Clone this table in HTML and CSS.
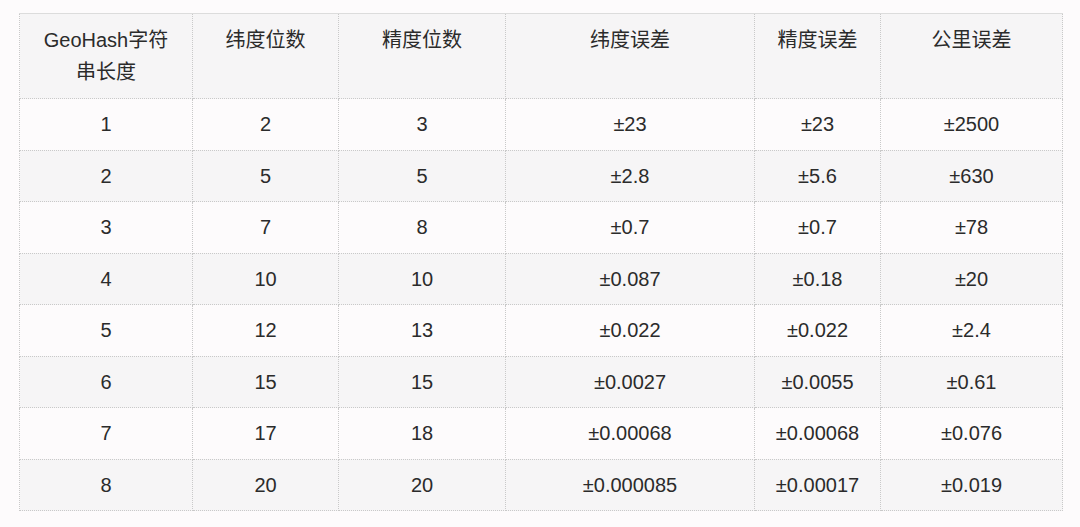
FILE: index.html
```html
<!DOCTYPE html>
<html lang="zh-CN">
<head>
<meta charset="utf-8">
<title>GeoHash</title>
<link rel="stylesheet" href="styles.css">
</head>
<body>
<table class="geo">
  <colgroup>
    <col class="c1"><col class="c2"><col class="c3"><col class="c4"><col class="c5"><col class="c6">
  </colgroup>
  <thead>
    <tr><th>GeoHash字符串长度</th><th>纬度位数</th><th>精度位数</th><th>纬度误差</th><th>精度误差</th><th>公里误差</th></tr>
  </thead>
  <tbody>
    <tr><td>1</td><td>2</td><td>3</td><td>±23</td><td>±23</td><td>±2500</td></tr>
    <tr><td>2</td><td>5</td><td>5</td><td>±2.8</td><td>±5.6</td><td>±630</td></tr>
    <tr><td>3</td><td>7</td><td>8</td><td>±0.7</td><td>±0.7</td><td>±78</td></tr>
    <tr><td>4</td><td>10</td><td>10</td><td>±0.087</td><td>±0.18</td><td>±20</td></tr>
    <tr><td>5</td><td>12</td><td>13</td><td>±0.022</td><td>±0.022</td><td>±2.4</td></tr>
    <tr><td>6</td><td>15</td><td>15</td><td>±0.0027</td><td>±0.0055</td><td>±0.61</td></tr>
    <tr><td>7</td><td>17</td><td>18</td><td>±0.00068</td><td>±0.00068</td><td>±0.076</td></tr>
    <tr><td>8</td><td>20</td><td>20</td><td>±0.000085</td><td>±0.00017</td><td>±0.019</td></tr>
  </tbody>
</table>
</body>
</html>
```
FILE: styles.css
```css
html, body {
  margin: 0;
  padding: 0;
  background: #fdfbfc;
}
body {
  padding: 13px 0 0 19px;
  font-family: "Liberation Sans", "Noto Sans CJK SC", sans-serif;
  font-size: 20px;
  color: #2b2b2b;
}
.geo {
  border-collapse: collapse;
  table-layout: fixed;
  width: 1043px;
}
.c1 { width: 173px; }
.c2 { width: 146px; }
.c3 { width: 167px; }
.c4 { width: 249px; }
.c5 { width: 126px; }
.c6 { width: 182px; }
.geo th, .geo td {
  border: 1px dotted #c9c9c9;
  text-align: center;
  line-height: 32px;
  padding: 0 16px;
}
.geo th {
  font-weight: normal;
  vertical-align: top;
  padding-top: 10px;
  border-top: 1px solid #dcdcdc;
}
.geo thead tr {
  height: 85px;
  background: #f6f5f6;
}
.geo tbody tr {
  height: 51.5px;
}
.geo td {
  vertical-align: middle;
}
.geo tbody tr:nth-child(even) {
  background: #f6f5f6;
}
```
